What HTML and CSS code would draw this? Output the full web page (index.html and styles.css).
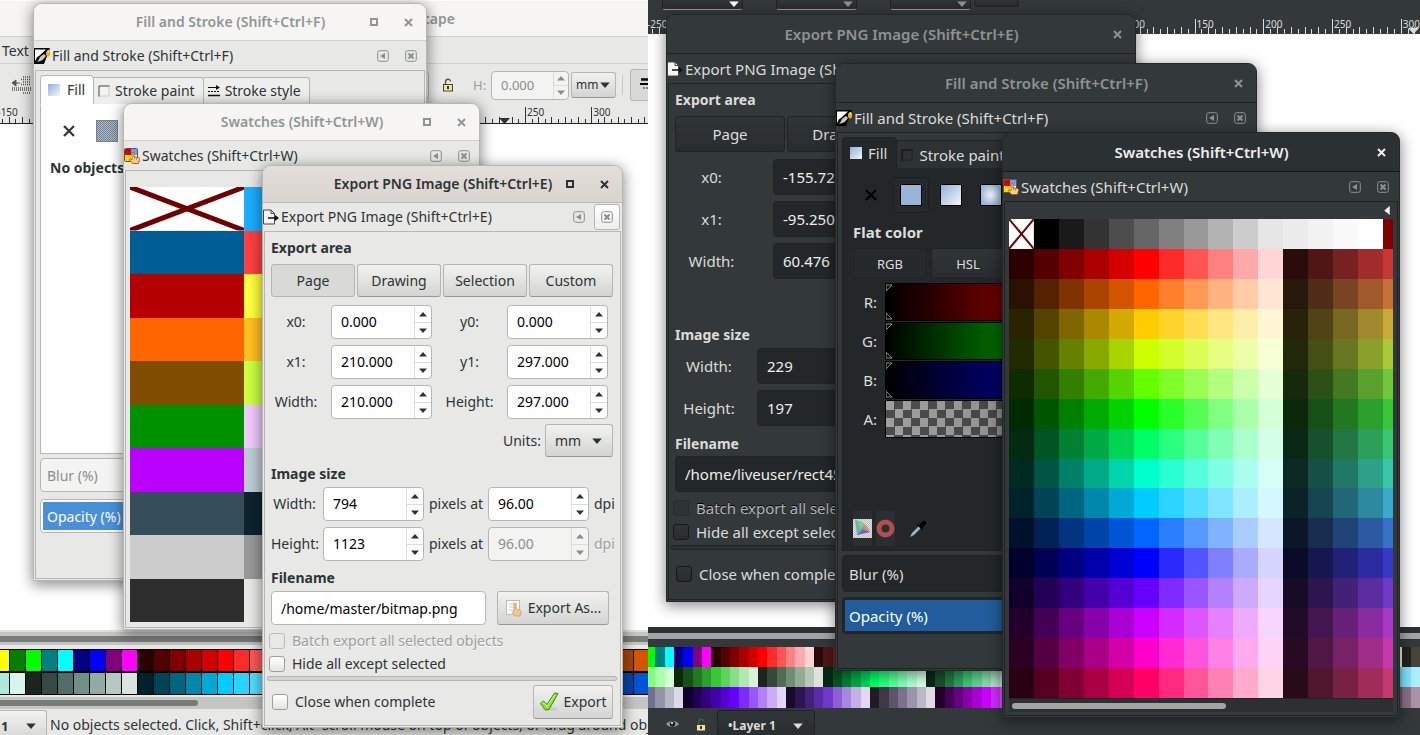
FILE: index.html
```html
<!DOCTYPE html>
<html lang="en">
<head>
<meta charset="utf-8">
<title>Inkscape dialogs, light and dark</title>
<link rel="stylesheet" href="styles.css">
</head>
<body>
<svg class="defs" aria-hidden="true">
  <defs>
    <linearGradient id="gBlue" x1="0" y1="0" x2="1" y2="1"><stop offset="0" stop-color="#8fb0d6"/><stop offset="1" stop-color="#f4f8fc"/></linearGradient>
    <radialGradient id="gRad"><stop offset="0" stop-color="#f4f4f2"/><stop offset="1" stop-color="#9ab6d8"/></radialGradient>
    <pattern id="pDots" width="2" height="2" patternUnits="userSpaceOnUse"><rect width="2" height="2" fill="#a9bcd3"/><rect width="1" height="1" fill="#77828e"/><rect x="1" y="1" width="1" height="1" fill="#77828e"/></pattern>
    <pattern id="pCheck" width="2" height="2" patternUnits="userSpaceOnUse"><rect width="2" height="2" fill="#e4e4e4"/><rect width="1" height="1" fill="#bbb"/><rect x="1" y="1" width="1" height="1" fill="#bbb"/></pattern>
  </defs>
  <symbol id="i-max" viewBox="0 0 8 8"><rect x="1" y="1" width="6" height="6" fill="none" stroke="currentColor" stroke-width="2"/></symbol>
  <symbol id="i-close" viewBox="0 0 9 9"><path d="M1 1l7 7M8 1l-7 7" fill="none" stroke="currentColor" stroke-width="2"/></symbol>
  <symbol id="i-dockmin" viewBox="0 0 12 12"><rect x=".7" y=".7" width="10.600" height="10.600" rx="2" fill="none" stroke="currentColor"/><path d="M8 3v6L3 6z" fill="currentColor"/></symbol>
  <symbol id="i-dockclose" viewBox="0 0 12 12"><rect x=".7" y=".7" width="10.600" height="10.600" rx="2" fill="none" stroke="currentColor"/><path d="M3.500 3.500l5 5M8.500 3.500l-5 5" stroke="currentColor" stroke-width="2"/></symbol>
  <symbol id="i-brush" viewBox="0 0 16 16"><path d="M0 0h16L10 16H0z" fill="#000"/><path d="M1 1.500h11L5 8C2 9 3 11 1 13z" fill="#fff"/><path d="M1 15c2-1 2-4 4-6l5-4 3 3-3 4c-3 2-6 3-9 3z" fill="#111"/><path d="M3 13.500c2-1 2-3 3-4.500l4-3 2 2-3 3.500c-2 1.500-4 2-6 2z" fill="#ccc"/><path d="M12 4l2-2 2 1v4l-2 2-2-2z" fill="#f5a800"/><path d="M13 3l2-1v3z" fill="#ffef70"/></symbol>
  <symbol id="i-hand" viewBox="0 0 16 16"><rect x=".5" y=".5" width="13" height="13" rx="1" fill="#fff" stroke="#555"/><rect x="1" y="1" width="6" height="6" fill="#d40000"/><rect x="7" y="1" width="6" height="6" fill="#6f9fdc"/><rect x="1" y="7" width="6" height="6" fill="#ffd500"/><path d="M8 5.500c0-1.500 2-1.500 2 0v3l4.500 1c1 .3 1 1 1 2l-1 4H8.500L5.500 12c-.5-1 .7-1.700 1.500-1l1 .8z" fill="#fbcb8b" stroke="#a35c0f" stroke-width=".9"/><path d="M10.500 9v2M12.500 9.500v2" stroke="#a35c0f" stroke-width=".7"/></symbol>
  <symbol id="i-doc" viewBox="0 0 16 16"><path d="M.5 1h7.500l3.500 3.500v10.500H.5z" fill="#f4f4f2" stroke="#444"/><path d="M8 1v3.500h3.500" fill="none" stroke="#444"/><path d="M5 9h8" stroke="#111" stroke-width="1.400"/><path d="M12 6l4 3-4 3z" fill="#111"/></symbol>
  <symbol id="i-cross" viewBox="0 0 12 12"><path d="M1 1l10 10M11 1L1 11" stroke="currentColor" stroke-width="2.200"/></symbol>
  <symbol id="i-up" viewBox="0 0 8 5"><path d="M4 0l4 4.500H0z" fill="currentColor"/></symbol>
  <symbol id="i-down" viewBox="0 0 8 5"><path d="M0 .5h8L4 5z" fill="currentColor"/></symbol>
  <symbol id="i-lock" viewBox="0 0 12 14"><path d="M3.500 7V4c0-3.500 5-3.500 5-.5" fill="none" stroke="#555" stroke-width="1.400"/><rect x="1.500" y="6.500" width="9" height="6.500" fill="#f3e48e" stroke="#333" stroke-width=".9"/><rect x="5" y="8" width="2" height="3" fill="#333"/></symbol>
  <symbol id="i-strokepaint" viewBox="0 0 12 12"><rect x="1" y="1" width="10" height="10" fill="#f4f4f4" stroke="#ccc"/><path d="M1 11.500V1h10.500" fill="none" stroke="#555"/></symbol>
  <symbol id="i-strokestyle" viewBox="0 0 12 12"><path d="M0 2.500h9" stroke="#111"/><path d="M8 0l4 2.500-4 2.500z" fill="#111"/><path d="M0 6.500h12" stroke="#111" stroke-dasharray="2 1"/><path d="M0 10.500h12" stroke="#111" stroke-width="1.500"/></symbol>
  <symbol id="i-x-cell" viewBox="0 0 100 100" preserveAspectRatio="none"><rect width="100" height="100" fill="#fff"/><path d="M0 0L100 100M100 0L0 100" stroke="#700000" stroke-width="5" vector-effect="non-scaling-stroke"/></symbol>
  <symbol id="i-x-small" viewBox="0 0 100 100" preserveAspectRatio="none"><rect width="100" height="100" fill="#fff"/><path d="M0 0L100 100M100 0L0 100" stroke="#700000" stroke-width="2" vector-effect="non-scaling-stroke"/></symbol>
</svg>

<main class="compare">
  <section class="desk light">
    <div class="app">
      <div class="app-title">Inkscape</div>
      <nav class="menubar"><a href="#">Text</a></nav>
      <div class="toolbar">
        <svg class="ic-outline" viewBox="0 0 19 18"><g stroke="#555" stroke-width="1.500" stroke-dasharray="1 1"><path d="M11 1h7M9 3.500h9M11 6h7M9 8.500h9M0 12h19M0 14h19M11 17h7"/></g><path d="M0 7l4-3v6zM4 7h4" fill="#555" stroke="#555"/></svg>
        <span class="grow"></span>
        <span class="spin stub"><input type="text" aria-label="W" disabled><span class="steps"><button disabled aria-label="Up"><svg><use href="#i-up"/></svg></button><button disabled aria-label="Down"><svg><use href="#i-down"/></svg></button></span></span>
        <svg class="ic-lock"><use href="#i-lock"/></svg>
        <label class="dim" for="tb-h">H:</label>
        <span class="spin disabled tb-spin"><input id="tb-h" type="text" value="0.000" disabled><span class="steps"><button disabled aria-label="Up"><svg><use href="#i-up"/></svg></button><button disabled aria-label="Down"><svg><use href="#i-down"/></svg></button></span></span>
        <span class="combo tb-combo"><select aria-label="Units"><option>mm</option></select><svg><use href="#i-down"/></svg></span>
        <span class="vsep"></span>
        <button class="btn pressed tb-last" aria-label="Scale stroke"><svg viewBox="0 0 16 14"><path d="M2 1.500h14" stroke="#000" stroke-width="2.500"/><path d="M1 6h15" stroke="#000" stroke-width="2"/><path d="M4 10h12" stroke="#222" stroke-dasharray="2 1"/></svg></button>
      </div>
      <svg class="ruler" data-start="-4.600" data-step="66.200" data-first="-150" data-h="18" data-marker="504"></svg>
      <div class="canvas"></div>
      <div class="trough hbar"><span></span></div>
      <div class="pal pal-light"></div>
      <div class="trough palbar"><span></span></div>
      <div class="status"><button class="btn layer"><b>1</b><svg><use href="#i-down"/></svg></button><span class="msg">No objects selected. Click, Shift+click, Alt+scroll mouse on top of objects, or drag around objects to select.</span></div>
    </div>

    <section class="win w-fill-l">
      <header class="tb"><h2>Fill and Stroke (Shift+Ctrl+F)</h2><button aria-label="Maximize"><svg class="s8"><use href="#i-max"/></svg></button><button aria-label="Close"><svg class="s9"><use href="#i-close"/></svg></button></header>
      <div class="dock"><svg class="s16"><use href="#i-brush"/></svg><span>Fill and Stroke (Shift+Ctrl+F)</span><button aria-label="Iconify"><svg class="s12"><use href="#i-dockmin"/></svg></button><button aria-label="Close dock"><svg class="s12"><use href="#i-dockclose"/></svg></button></div>
      <div class="frame">
        <div class="tabs"><button class="tab on"><svg class="s12" viewBox="0 0 12 12"><rect width="12" height="12" fill="url(#gBlue)"/></svg>Fill</button><button class="tab"><svg class="s12"><use href="#i-strokepaint"/></svg>Stroke paint</button><button class="tab"><svg class="s12"><use href="#i-strokestyle"/></svg>Stroke style</button></div>
        <div class="page">
          <div class="kinds"><button aria-label="No paint"><svg class="s12"><use href="#i-cross"/></svg></button><button aria-label="Flat color"><svg class="s22" viewBox="0 0 22 22"><rect x=".5" y=".5" width="21" height="21" fill="url(#pDots)" stroke="#333" stroke-dasharray="1 1"/></svg></button></div>
          <h3>No objects</h3>
        </div>
        <input class="meter" type="text" aria-label="Blur" value="Blur (%)" disabled>
        <div class="meter focus"><input type="text" aria-label="Opacity" value="Opacity (%)"></div>
      </div>
    </section>

    <section class="win w-sw-l">
      <header class="tb"><h2>Swatches (Shift+Ctrl+W)</h2><button aria-label="Maximize"><svg class="s8"><use href="#i-max"/></svg></button><button aria-label="Close"><svg class="s9"><use href="#i-close"/></svg></button></header>
      <div class="dock"><svg class="s16"><use href="#i-hand"/></svg><span>Swatches (Shift+Ctrl+W)</span><button aria-label="Iconify"><svg class="s12"><use href="#i-dockmin"/></svg></button><button aria-label="Close dock"><svg class="s12"><use href="#i-dockclose"/></svg></button></div>
      <div class="frame"><div class="echo"></div></div>
    </section>

    <section class="win w-ex-l active">
      <header class="tb"><h2>Export PNG Image (Shift+Ctrl+E)</h2><button aria-label="Maximize"><svg class="s8"><use href="#i-max"/></svg></button><button aria-label="Close"><svg class="s9"><use href="#i-close"/></svg></button></header>
      <div class="dock"><svg class="s16"><use href="#i-doc"/></svg><span>Export PNG Image (Shift+Ctrl+E)</span><button aria-label="Iconify"><svg class="s12"><use href="#i-dockmin"/></svg></button><button class="hover" aria-label="Close dock"><svg class="s12"><use href="#i-dockclose"/></svg></button></div>
      <form class="frame export">
        <h3>Export area</h3>
        <div class="areas"><button type="button" class="btn pressed">Page</button><button type="button" class="btn">Drawing</button><button type="button" class="btn">Selection</button><button type="button" class="btn">Custom</button></div>
        <div class="coords" data-spins="x0:=0.000|y0:=0.000|x1:=210.000|y1:=297.000|Width:=210.000|Height:=297.000"></div>
        <div class="units"><label for="u">Units:</label><span class="combo"><select id="u"><option>mm</option></select><svg><use href="#i-down"/></svg></span></div>
        <h3>Image size</h3>
        <div class="sizes" data-spins="Width:=794|pixels at=96.00=dpi|Height:=1123|pixels at=96.00=dpi=off"></div>
        <h3>Filename</h3>
        <div class="file"><input class="entry" type="text" aria-label="Filename" value="/home/master/bitmap.png"><button type="button" class="btn"><svg class="s18" viewBox="0 0 18 18"><rect x="1.500" y="1.500" width="13" height="14" fill="#fafaf8" stroke="#bbb"/><path d="M4 5h8M4 8h8M4 11h5" stroke="#ccc"/><path d="M9 5c0-1.500 2-1.500 2 0v5l4 1c1 .3 1 1 1 2l-1 4h-5L7.500 14c-.5-1 .7-1.700 1.500-1z" fill="#f3c791" stroke="#d09a5c" stroke-width=".8"/></svg>Export As...</button></div>
        <label class="check off"><input type="checkbox" disabled>Batch export all selected objects</label>
        <label class="check"><input type="checkbox">Hide all except selected</label>
        <div class="hsep"></div>
        <div class="last"><label class="check"><input type="checkbox">Close when complete</label><button type="button" class="btn"><svg class="s20" viewBox="0 0 20 20"><ellipse cx="11" cy="17" rx="8" ry="2" fill="#ccc"/><path d="M1.500 11.500l3-2.500 3.500 3.500L15.500 1l3.500.5L10 17.500 6.500 18z" fill="#8ae234" stroke="#3f8a05"/><path d="M3 11.500l1.500-1L8 14.500 16 2.500" stroke="#c9f59a" fill="none"/></svg>Export</button></div>
      </form>
    </section>
  </section>

  <section class="desk dark">
    <div class="app">
      <div class="toolbar"><span class="combo cut"><svg><use href="#i-down"/></svg></span><span class="combo cut faint"><svg><use href="#i-down"/></svg></span><span class="combo cut faint"><svg><use href="#i-down"/></svg></span><span class="btn cut-btn"></span></div>
      <svg class="ruler" data-start="-3" data-step="68.700" data-first="-250" data-h="16" data-marker="765"></svg>
      <div class="canvas"></div>
      <div class="trough hbar"><span></span></div>
      <div class="pal pal-dark"></div>
      <div class="status"><svg class="ic-eye" viewBox="0 0 13 10"><path d="M0 5c3-4 10-4 13 0-3 4-10 4-13 0z" fill="#999"/><circle cx="6.500" cy="5" r="2.800" fill="#222"/><circle cx="6" cy="4" r="1" fill="#fff"/></svg><svg class="ic-lock"><use href="#i-lock"/></svg><button class="btn layer"><b>•Layer 1</b><svg><use href="#i-down"/></svg></button></div>
    </div>

    <section class="win w-ex-d">
      <header class="tb"><h2>Export PNG Image (Shift+Ctrl+E)</h2><button aria-label="Close"><svg class="s9"><use href="#i-close"/></svg></button></header>
      <div class="dock"><svg class="s16"><use href="#i-doc"/></svg><span>Export PNG Image (Shift+Ctrl+E)</span><button aria-label="Iconify"><svg class="s12"><use href="#i-dockmin"/></svg></button><button aria-label="Close dock"><svg class="s12"><use href="#i-dockclose"/></svg></button></div>
      <form class="frame export">
        <h3>Export area</h3>
        <div class="areas"><button type="button" class="btn">Page</button><button type="button" class="btn">Drawing</button><button type="button" class="btn">Selection</button><button type="button" class="btn">Custom</button></div>
        <div class="field"><label for="dx0">x0:</label><input class="entry" id="dx0" value="-155.726"></div>
        <div class="field"><label for="dx1">x1:</label><input class="entry" id="dx1" value="-95.250"></div>
        <div class="field"><label for="dw">Width:</label><input class="entry" id="dw" value="60.476"></div>
        <h3 class="gap-top">Image size</h3>
        <div class="field img"><label for="dpw">Width:</label><input class="entry" id="dpw" value="229"></div>
        <div class="field img"><label for="dph">Height:</label><input class="entry" id="dph" value="197"></div>
        <h3>Filename</h3>
        <div class="file"><input class="entry" type="text" aria-label="Filename" value="/home/liveuser/rect4518.png"></div>
        <label class="check off"><input type="checkbox" disabled>Batch export all selected objects</label>
        <label class="check"><input type="checkbox">Hide all except selected</label>
        <div class="hsep"></div>
        <div class="last"><label class="check"><input type="checkbox">Close when complete</label></div>
      </form>
    </section>

    <section class="win w-fill-d">
      <header class="tb"><h2>Fill and Stroke (Shift+Ctrl+F)</h2><button aria-label="Close"><svg class="s9"><use href="#i-close"/></svg></button></header>
      <div class="dock"><svg class="s16"><use href="#i-brush"/></svg><span>Fill and Stroke (Shift+Ctrl+F)</span><button aria-label="Iconify"><svg class="s12"><use href="#i-dockmin"/></svg></button><button aria-label="Close dock"><svg class="s12"><use href="#i-dockclose"/></svg></button></div>
      <div class="frame">
        <div class="tabs"><button class="tab on"><svg class="s12" viewBox="0 0 12 12"><rect width="12" height="12" fill="url(#gBlue)"/></svg>Fill</button><button class="tab"><svg class="s12" viewBox="0 0 12 12"><path d="M1 12V1h11" fill="none" stroke="#16191a" stroke-width="1.500"/><path d="M11 2v9H2" fill="none" stroke="#25292b" stroke-width="1.500"/></svg>Stroke paint</button></div>
        <div class="page">
          <div class="kinds"><button aria-label="No paint"><svg class="s12 black"><use href="#i-cross"/></svg></button><button class="sel" aria-label="Flat color"><svg class="s22" viewBox="0 0 22 22"><rect x=".5" y=".5" width="21" height="21" fill="#98b4d6" stroke="#000"/></svg></button><button aria-label="Linear gradient"><svg class="s22" viewBox="0 0 22 22"><rect x=".5" y=".5" width="21" height="21" fill="url(#gBlue)" stroke="#000"/></svg></button><button aria-label="Radial gradient"><svg class="s22" viewBox="0 0 22 22"><rect x=".5" y=".5" width="21" height="21" fill="url(#gRad)" stroke="#000"/></svg></button></div>
          <h3>Flat color</h3>
          <div class="modes"><button class="btn pressed">RGB</button><button class="btn">HSL</button></div>
          <div class="chan"><span>R:</span><i class="bar r"><svg viewBox="0 0 6 37"><path d="M0 1h6L0 7zM0 36h6L0 30z"/></svg></i></div>
          <div class="chan"><span>G:</span><i class="bar g"><svg viewBox="0 0 6 37"><path d="M0 1h6L0 7zM0 36h6L0 30z"/></svg></i></div>
          <div class="chan"><span>B:</span><i class="bar b"><svg viewBox="0 0 6 37"><path d="M0 1h6L0 7zM0 36h6L0 30z"/></svg></i></div>
          <div class="chan"><span>A:</span><i class="bar a"></i></div>
          <div class="extras">
            <svg class="tile" viewBox="0 0 19 35"><rect y="8" width="19" height="19" fill="url(#pCheck)"/><path d="M2 9l2 15 13-3C14 14 9 10 2 9z" fill="#6db59a"/><path d="M4 24l13-3-7-3z" fill="#7a5bd0"/><path d="M10 18l7 3-4-7z" fill="#e3877c"/><path d="M4 10l4 8 3-5z" fill="#7fd67a"/></svg>
            <svg class="tile" viewBox="0 0 19 35"><circle cx="9.500" cy="17.500" r="6.500" fill="none" stroke="#b04f4f" stroke-width="5"/></svg>
            <svg class="s18" viewBox="0 0 18 18"><path d="M1 17l2-4 7-7 2 2-7 7z" fill="#9fb3c9"/><path d="M8 5l5 5 1-3 3-3c1-2-1-4-3-3l-3 3z" fill="#000"/></svg>
          </div>
        </div>
        <input class="meter" type="text" aria-label="Blur" value="Blur (%)">
        <div class="meter focus"><input type="text" aria-label="Opacity" value="Opacity (%)"></div>
      </div>
    </section>

    <section class="win w-sw-d active">
      <header class="tb"><h2>Swatches (Shift+Ctrl+W)</h2><button aria-label="Close"><svg class="s9"><use href="#i-close"/></svg></button></header>
      <div class="dock"><svg class="s16"><use href="#i-hand"/></svg><span>Swatches (Shift+Ctrl+W)</span><button aria-label="Iconify"><svg class="s12"><use href="#i-dockmin"/></svg></button><button aria-label="Close dock"><svg class="s12"><use href="#i-dockclose"/></svg></button></div>
      <div class="frame">
        <button class="menu-arrow" aria-label="Palette menu"><svg viewBox="0 0 6 10"><path d="M6 0v10L0 5z" fill="#fff"/></svg></button>
        <div class="inkgrid"></div>
        <div class="trough swbar"><span></span></div>
      </div>
    </section>
  </section>
</main>
<script src="app.js"></script>
</body>
</html>
```
FILE: styles.css
```css
* { box-sizing: border-box; }
body { margin: 0; font-family: "Noto Sans", "Open Sans", sans-serif; overflow: hidden; }
button, input, select { font: inherit; color: inherit; margin: 0; padding: 0; border: 0; background: none; min-width: 0; }
h2, h3 { margin: 0; font-size: inherit; line-height: 20px; }
.defs { position: absolute; width: 0; height: 0; }
svg { display: block; flex: none; }
.s8 { width: 8px; height: 8px; }
.s9 { width: 9px; height: 9px; }
.s12 { width: 12px; height: 12px; }
.s16 { width: 16px; height: 16px; }
.s18 { width: 18px; height: 18px; }
.s20 { width: 20px; height: 20px; }
.s22 { width: 22px; height: 22px; }
.black { color: #000; }
.grow { flex: 1; }

.compare { display: grid; grid-template-columns: 648fr 772fr; height: 100vh; }
.desk { position: relative; overflow: hidden; min-width: 0; line-height: 20px; }
.light {
  --bg: #e8e8e6; --fg: #2e3436; --dimfg: #8b8e8f; --line: #b6b6b3; --tb: #f6f5f4; --tbline: #d5d0cc;
  --entry: #fff; --page: #fff; --btn: linear-gradient(#f2f2f1, #d4d4d2); --pressed: #d9d9d7; --sel: #4a90d9; --icon: #8b8e8f;
  --trough: #c4c6c4; --thumb: #787c7b; --entryfg: #000; --titlefg: #929595;
  font-size: 14px; color: var(--fg);
}
.dark {
  --bg: #33393b; --fg: #dcdcda; --dimfg: #8b8e8f; --line: #1f2324; --tb: #33393b; --tbline: #1f2324;
  --entry: #232729; --page: #232729; --btn: linear-gradient(#303537, #282c2e); --pressed: #25292b; --sel: #215d9c; --icon: #8d9191;
  --trough: #2b3032; --thumb: #a3a5a4; --entryfg: #eeeeec; --titlefg: #8f9292;
  font-size: 15px; color: var(--fg);
}

.app { display: flex; flex-direction: column; height: 100%; background: var(--bg); }
.canvas { flex: 1; background: #fff; }
.app-title { height: 37px; background: var(--tb); border-bottom: 1px solid var(--tbline); border-top: 1px solid #fff; padding: 8px 193px 0 0; text-align: right; font-weight: 600; color: var(--titlefg); }
.menubar { height: 27px; border-bottom: 1px solid #d0d0ce; padding: 4px 2px; }
.menubar a { color: inherit; text-decoration: none; }
.toolbar { display: flex; align-items: center; height: 42px; padding-left: 12px; }
.ruler { width: 100%; height: 18px; overflow: hidden; }
.light .ruler { color: var(--fg); border-bottom: 1px solid #222; }
.dark .ruler { color: #dcdcda; }
.ruler text { font-size: 10px; fill: currentColor; }
.ruler .tick { stroke: currentColor; }
.ic-outline { width: 19px; height: 18px; }
.ic-lock { width: 12px; height: 14px; }
.trough { background: var(--trough); }
.trough span { display: block; background: var(--thumb); }
.light .hbar { border-top: 2px solid #e0e0de; padding: 4px 0 3px; border-bottom: 4px solid var(--bg); }
.light .hbar span { height: 6px; }
.dark .hbar { padding: 6px 0 1px; border-bottom: 7px solid var(--bg); }
.dark .hbar span { height: 6px; }
.palbar { border-top: 2px solid var(--bg); padding: 3px 0; }
.palbar span { width: 198px; height: 6px; border-radius: 0 3px 3px 0; }
.status { display: flex; align-items: flex-start; white-space: nowrap; overflow: hidden; }
.light .status { height: 26px; }
.dark .status { height: 27px; padding-left: 18px; }
.msg { padding-top: 6px; }
.dark .status > svg { margin-top: 11px; }
.dark .status > .ic-lock { margin: 10px 0 0 16px; }
.ic-eye { width: 13px; height: 10px; }
.layer { flex: none; height: 32px; }
.layer.btn { justify-content: space-between; }
.layer svg { width: 10px; height: 6px; }
.light .layer { width: 47px; padding: 0 10px 0 1px; margin: 1px 3px 0 0; border-left: 0; border-radius: 0 3px 3px 0; font-size: 13px; }
.dark .layer { width: 98px; padding: 0 11px 0 10px; margin: 2px 0 0 10px; font-size: 12px; }

.pal { display: grid; overflow: hidden; }
.pal-light { background: #000; gap: 2px; padding: 1px 0; margin-left: -6px; }
.pal-light div { display: flex; gap: 1px; height: 21px; }
.pal-light i { flex: none; width: 15px; }
.pal-dark { margin: 0 0 0 -2px; }
.pal-dark div { display: flex; height: 20px; }
.pal-dark div:last-child { height: 21px; }
.pal-dark i { flex: 1; }

.win { position: absolute; display: flex; flex-direction: column; background: var(--bg); border: 1px solid var(--line); border-radius: 9px 9px 0 0; box-shadow: 0 3px 14px 1px rgba(0, 0, 0, .45); overflow: hidden; }
.dark .win { border-color: #24282a; }
.win > * { flex: none; }
.win > .frame { flex: 1; min-height: 0; }
.tb { display: flex; align-items: center; justify-content: flex-end; height: 37px; background: var(--tb); border-bottom: 1px solid var(--tbline); color: var(--titlefg); padding-right: 13px; gap: 26px; }
.dark .tb { height: 39px; }
.tb h2 { flex: 1; text-align: center; font-weight: 600; white-space: nowrap; }
.tb button { display: block; }
.light .tb h2 { margin-right: -77px; padding-left: 6px; }
.dark .tb h2 { margin-right: -49px; }
.light .active .tb { background: linear-gradient(#e3deda, #d9d4cf); color: #2e3436; border-color: #bfb8b1; }
.dark .active .tb { background: #2b3032; color: #eeeeec; border-color: #16191a; }
.dock { display: flex; align-items: center; height: 29px; padding-right: 9px; }
.active .dock { height: 28px; }
.dark .dock { height: 29px; padding-right: 10px; }
.dock span { flex: 1; white-space: nowrap; padding-left: 2px; }
.dock button { color: var(--icon); margin-left: 16px; }
.dock .hover { border: 1px solid var(--line); border-radius: 3px; background: linear-gradient(#fff, #ededeb); padding: 6px; margin: 0 0 0 9px; }
.active .dock:has(.hover) { padding-right: 2px; }
.frame { display: flex; flex-direction: column; border: 1px solid var(--line); margin: 0 1px 1px; padding: 4px; }

.w-fill-l { left: 33px; top: 3px; width: 394px; height: 578px; }
.w-sw-l { left: 123px; top: 103px; width: 357px; height: 527px; }
.w-ex-l { left: 262px; top: 165px; width: 361px; height: 563px; }
.w-ex-d { left: 18px; top: 14px; width: 470px; height: 588px; }
.w-fill-d { left: 187px; top: 63px; width: 422px; height: 608px; }
.w-sw-d { left: 354px; top: 132px; width: 398px; height: 586px; }

.btn { background: var(--btn); border: 1px solid var(--line); border-bottom-color: #989896; border-radius: 3px; display: flex; align-items: center; justify-content: center; }
.dark .btn { border-color: var(--line); }
.btn.pressed { background: var(--pressed); border-color: var(--line); }
.entry { background: var(--entry); color: var(--entryfg); border: 1px solid var(--line); border-radius: 4px; height: 34px; padding: 0 9px; }
.dark .entry { height: 36px; }
.spin { display: flex; width: 101px; height: 34px; background: var(--entry); color: var(--entryfg); border: 1px solid var(--line); border-radius: 4px; overflow: hidden; }
.spin input { flex: 1; width: 0; padding-left: 9px; }
.steps { display: grid; grid-template-rows: 1fr 1fr; width: 17px; border-left: 1px solid #dcdcda; color: #2e3436; }
.steps button { display: flex; align-items: center; justify-content: center; }
.steps button + button { border-top: 1px solid #dcdcda; }
.steps svg { width: 8px; height: 5px; }
.disabled, .stub { background: #f3f3f2; color: var(--dimfg); }
.disabled .steps, .stub .steps { color: #8b8e8f; }
.dim { color: #9b9e9e; }
.combo { display: flex; align-items: center; position: relative; background: var(--btn); border: 1px solid var(--line); border-bottom-color: #989896; border-radius: 3px; height: 33px; width: 68px; }
.combo select { appearance: none; width: 100%; height: 100%; padding-left: 9px; }
.combo svg { position: absolute; right: 10px; width: 10px; height: 6px; pointer-events: none; }
.stub { width: 60px; height: 29px; margin-right: 13px; }
.light .toolbar .ic-lock { margin-right: 19px; }
.light .toolbar .dim { margin-right: 6px; width: 12px; font-size: 13px; }
.toolbar label { white-space: nowrap; }
.tb-spin { width: 78px; height: 29px; font-size: 13px; }
.tb-spin .steps { width: 15px; }
.tb-combo { width: 45px; height: 26px; margin: 0 6px 0 2px; font-size: 12px; }
.tb-combo select { padding-left: 4px; }
.tb-combo svg { right: 5px; }
.vsep { width: 1px; height: 20px; background: #c8c8c6; }
.tb-last { width: 18px; height: 32px; margin-left: 7px; border-right: 0; border-radius: 3px 0 0 3px; overflow: hidden; padding-left: 8px; }
.tb-last.btn { justify-content: flex-start; }
.tb-last svg { width: 16px; height: 14px; }
.dark .toolbar { height: 18px; align-items: flex-start; padding-left: 14px; }
.dark .ruler { height: 16px; }
.cut { width: 81px; height: 10px; margin-right: 33px; border-top: 0; border-radius: 0 0 3px 3px; color: #fff; }
.cut svg { top: 1px; right: 3px; }
.faint { color: #8d9191; }
.cut-btn { width: 45px; height: 7px; border-top: 0; margin-left: -30px; }

.tabs { display: flex; align-items: flex-end; }
.tab { display: flex; align-items: center; gap: 5px; height: 27px; padding: 0 8px 0 4px; background: #eeeeec; border: 1px solid var(--line); border-bottom: 0; border-left: 0; border-radius: 0 3px 0 0; white-space: nowrap; }
.tab.on { height: 29px; background: var(--page); border-left: 1px solid var(--line); border-radius: 4px 4px 0 0; padding: 0 8px 0 7px; gap: 7px; }
.dark .tab { background: #2d3234; height: 28px; gap: 6px; }
.dark .tab.on { height: 31px; background: var(--page); padding: 0 9px 0 7px; }
.page { background: var(--page); border: 1px solid var(--line); border-top-color: transparent; height: 350px; padding: 9px; }
.kinds { display: flex; align-items: center; }
.kinds button { display: flex; align-items: center; justify-content: center; width: 38px; height: 34px; border-radius: 4px; }
.meter { width: 100%; height: 34px; border: 1px solid var(--line); border-radius: 4px; background: var(--entry); padding: 0 6px; margin-top: 4px; }
.meter:disabled { background: #f3f3f2; color: var(--dimfg); }
.focus { padding: 2px; margin-top: 7px; }
.focus input { width: 100%; height: 100%; background: var(--sel); color: #fff; padding: 0 4px; }
.w-fill-l h3 { margin: 10px 0 0; }
.dark .meter { height: 37px; }
.dark .focus { margin-top: 5px; }
.w-fill-d .page { height: 383px; padding: 8px 10px; }
.w-fill-d .kinds button { width: 36px; height: 36px; margin-right: 4px; border: 1px solid transparent; }
.w-fill-d .kinds .sel { border-color: #1b1f20; background: #25292b; }
.w-fill-d h3 { margin: 9px 0 6px; }
.modes { display: flex; gap: 4px; margin-bottom: 4px; font-size: 13px; }
.modes .btn { width: 74px; height: 31px; }
.chan { display: flex; align-items: center; gap: 8px; margin-bottom: 1px; }
.chan span { width: 24px; text-align: right; }
.bar { flex: 1; height: 38px; border: 1px solid #000; }
.bar svg { width: 6px; height: 100%; fill: #000; stroke: #bbb; stroke-width: .8; }
.bar.r { background: linear-gradient(90deg, #000, #5f0000 100px, #b00000); }
.bar.g { background: linear-gradient(90deg, #000, #005f00 100px, #00b000); }
.bar.b { background: linear-gradient(90deg, #000, #00005f 100px, #0000b0); }
.bar.a { background: linear-gradient(90deg, rgba(0,0,0,0), rgba(0,0,0,.3)), repeating-conic-gradient(#4d4d4d 0 25%, #a0a0a0 0 50%) 0 0 / 17px 17px; }
.extras { display: flex; align-items: center; gap: 4px; margin-top: 73px; }
.tile { width: 19px; height: 35px; background: #2b2f31; }
.extras .s18 { margin-left: 10px; }

.w-sw-l .frame { padding: 16px 4px 5px; }
.echo { display: grid; grid-template-columns: 1fr 1fr 1fr; grid-auto-flow: column; grid-template-rows: repeat(10, minmax(0, 1fr)); flex: 1; min-height: 0; }
.echo svg, .inkgrid svg { width: 100%; height: 0; min-height: 100%; }
.w-sw-d .frame { padding: 0 4px; }
.menu-arrow { align-self: flex-end; padding: 4px 3px; height: 17px; }
.menu-arrow svg { width: 6px; height: 9px; }
.inkgrid { display: grid; grid-template-columns: repeat(15, minmax(0, 5fr)) minmax(0, 2fr); grid-template-rows: repeat(16, minmax(0, 1fr)); flex: 1; min-height: 0; }
.swbar { padding: 4px 3px 3px; border-top: 1px solid var(--line); margin-bottom: 3px; }
.swbar span { width: 214px; height: 6px; border-radius: 3px; }

.export { padding: 6px; }
.w-ex-l .export { padding-right: 7px; }
.export h3 { font-size: 14px; }
.areas { display: grid; grid-template-columns: repeat(4, 1fr); gap: 2px; margin: 6px 0 8px; }
.areas .btn { height: 33px; }
.coords { display: grid; grid-template-columns: 50px 101px 1fr 101px; column-gap: 10px; row-gap: 6px; padding-right: 5px; align-items: center; text-align: center; }
.units { display: flex; justify-content: flex-end; align-items: center; gap: 4px; margin: 5px 0 7px; }
.sizes { display: grid; grid-template-columns: 47px 101px 54px 101px 1fr; column-gap: 5px; row-gap: 6px; align-items: center; margin: 3px 0 7px; white-space: nowrap; text-align: center; }
.file { display: flex; gap: 11px; margin: 3px 4px 8px 0; }
.file .entry { flex: 1; }
.file .btn { width: 112px; gap: 5px; }
.check { display: flex; align-items: center; height: 16px; gap: 7px; margin: 0 0 7px -2px; white-space: nowrap; }
.check input { appearance: none; width: 16px; height: 16px; flex: none; border: 1px solid #a0a09e; border-radius: 3px; background: linear-gradient(#fff, #e4e4e2); }
.off { color: #9b9e9e; }
.light .off { text-shadow: 0 1px #fff; }
.check input:disabled { background: transparent; border-color: #bcbcba; }
.hsep { height: 5px; border: 1px solid var(--line); border-radius: 2px; margin: -3px -4px 4px; background: #d4d4d2; }
.last { display: flex; justify-content: space-between; align-items: center; }
.last .check { margin: 0 0 0 1px; }
.last .btn { width: 80px; height: 34px; gap: 4px; }

.w-ex-d .areas { grid-template-columns: repeat(4, 110px); margin: 6px 0 7px; }
.w-ex-d .areas .btn { height: 36px; }
.field { display: grid; grid-template-columns: 73px 110px; column-gap: 25px; align-items: center; text-align: center; margin-bottom: 6px; }
.field .entry { width: 110px; }
.field.img { grid-template-columns: 68px 110px; column-gap: 14px; }
.gap-top { margin-top: 40px; }
.w-ex-d h3 + .field { margin-top: 3px; }
.w-ex-d .field + h3:not(.gap-top) { margin-top: 2px; }
.w-ex-d .file { margin: 2px 0 8px; }
.dark .check { margin-bottom: 8px; }
.dark .check input { border-color: #16191a; background: linear-gradient(#303537, #282c2e); }
.dark .check input:disabled { background: #2e3335; border-color: #282c2e; }
.dark .off { color: #b4b6b5; text-shadow: 0 -1px #000; }
.dark .hsep { background: #2b3032; margin: -3px -4px 16px; }
.dark .last .check { margin: 0 0 0 1px; }
```
FILE: app.js
```js
const SAT = [8.4, 16.7, 25.1, 33.3, 41.6, 50, 58.2, 66.7, 75.1, 83.3, 91.8];
const NEUTRAL = [12.5, 25, 37.5, 50, 62.5, 75, 87.5];

function shade(hue, k) {
  if (k < 11) return `hsl(${hue} 100% ${SAT[k]}%)`;
  if (k < 20) return `hsl(${hue} 57% ${(k - 10) * 10}%)`;
  return `hsl(${hue} 12.5% ${NEUTRAL[k - 20]}%)`;
}
function run(start, count) {
  const out = [];
  for (let n = start; n < start + count; n++) out.push(shade(Math.floor(n / 27) * 24, n % 27));
  return out;
}
function cell(color) {
  return `<i style="background:${color}"></i>`;
}
const xCell = id => `<svg><use href="#${id}"/></svg>`;
const rows = list => list.map(r => `<div>${r.map(cell).join('')}</div>`).join('');

const primaries = ['#0f0', '#008080', '#0ff', '#000080', '#00f', '#800080', '#f0f'];
document.querySelector('.pal-light').innerHTML = rows([
  ['#ff0', '#008000', ...primaries, ...run(0, 34)],
  ['#afe9dd', ...run(7 * 27 + 19, 42)]
]);
document.querySelector('.pal-dark').innerHTML = rows([
  [...primaries, ...run(0, 76)], run(143, 83), run(293, 83)
]);

const echo = [
  '', '#005c94', '#b50000', '#ff6600', '#804d00', '#009100', '#ba00ff', '#364e59', '#cccccc', '#2d2d2d',
  '#19aeff', '#ff4141', '#ffff3e', '#ffc022', '#ccff42', '#f1caff', '#bdcdd4', '#0e232e', '#999999'
];
document.querySelector('.echo').innerHTML = echo.map(c => c ? cell(c) : xCell('i-x-cell')).join('');

const grays = ['#000', '#1a1a1a', '#333', '#4d4d4d', '#666', '#808080', '#999', '#b3b3b3', '#ccc', '#e6e6e6', '#ececec', '#f2f2f2', '#f9f9f9', '#fff', '#800000'];
let grid = xCell('i-x-small') + grays.map(cell).join('');
for (let r = 0; r < 15; r++) grid += run(r * 27, 16).map(cell).join('');
document.querySelector('.inkgrid').innerHTML = grid;

document.querySelectorAll('[data-spins]').forEach((box, b) => {
  box.innerHTML = box.dataset.spins.split('|').map((s, i) => {
    const [label, value, unit, off] = s.split('=');
    const id = `spin-${b}-${i}`;
    const dis = off ? 'disabled' : '';
    return `<label for="${id}">${label}</label><span class="spin ${dis}"><input id="${id}" type="text" value="${value}" ${dis}>` +
      `<span class="steps"><button type="button" aria-label="Up" ${dis}><svg><use href="#i-up"/></svg></button>` +
      `<button type="button" aria-label="Down" ${dis}><svg><use href="#i-down"/></svg></button></span></span>` +
      (unit ? `<span class="${off ? 'off' : ''}">${unit}</span>` : '');
  }).join('');
});

document.querySelectorAll('.ruler').forEach(svg => {
  const d = svg.dataset, h = +d.h, step = +d.step;
  let out = '';
  for (let i = 0; i < 13; i++) {
    const x = +d.start + i * step;
    out += `<text x="${x + 2}" y="10">${+d.first + i * 50}</text>`;
    for (let j = 0; j < 10; j++) {
      const tx = Math.round(x + j * step / 10) + 0.5;
      out += `<path class="tick" d="M${tx} ${h}V${j === 0 ? 1 : j % 2 ? h - 5 : h - 7}"/>`;
    }
  }
  out += `<path d="M${d.marker - 5} ${h - 6}h11l-5.500 6z" fill="currentColor"/>`;
  svg.innerHTML = out;
});
```
